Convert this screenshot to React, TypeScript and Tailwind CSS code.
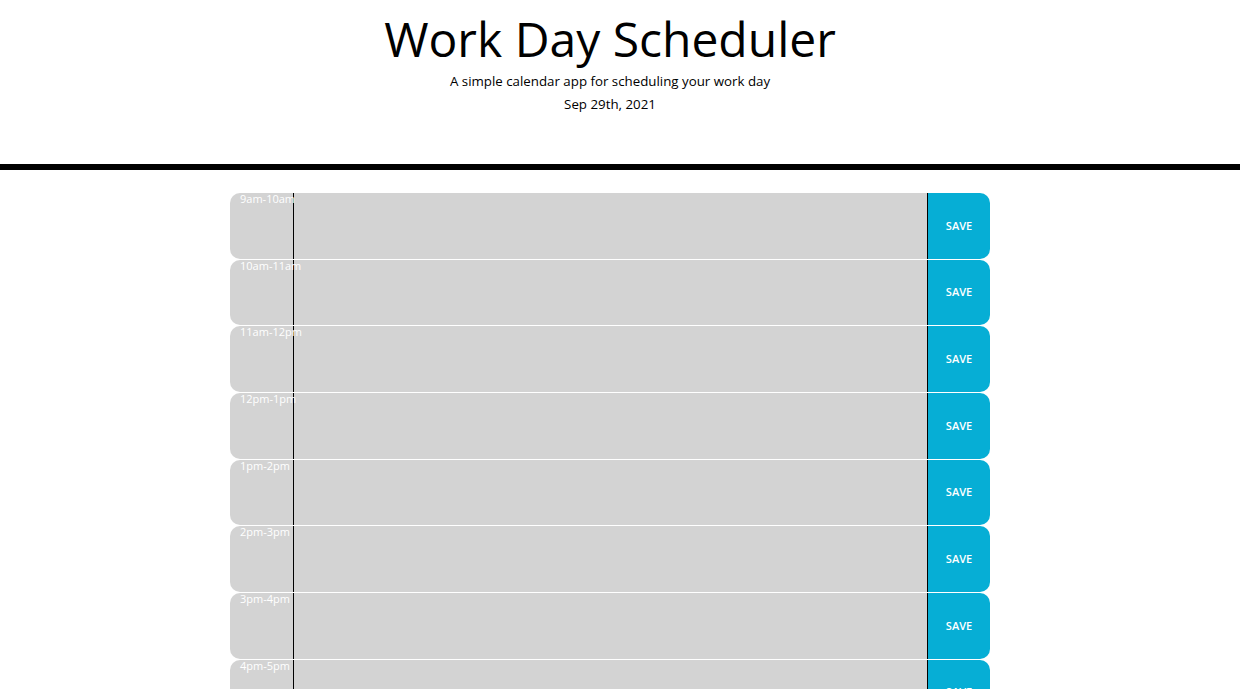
const hours = [
  "9am-10am",
  "10am-11am",
  "11am-12pm",
  "12pm-1pm",
  "1pm-2pm",
  "2pm-3pm",
  "3pm-4pm",
  "4pm-5pm",
  "5pm-6pm",
];

function TimeBlock({ label }: { label: string }) {
  return (
    <div className="flex h-[65.67px] shrink-0">
      <div className="relative z-10 w-[64px] shrink-0 rounded-l-[10px] border-r border-black bg-[#d3d3d3] pl-[10px] text-[11px] leading-[11px] text-white whitespace-nowrap">
        {label}
      </div>
      <textarea className="h-full w-[633px] shrink-0 resize-none bg-[#d3d3d3] outline-none" />
      <button className="w-[63px] shrink-0 rounded-r-[10px] border-l border-black bg-[#06aed5] text-[11px] font-semibold text-white">
        SAVE
      </button>
    </div>
  );
}

export default function App() {
  return (
    <div className="min-h-screen bg-white text-black" style={{ fontFamily: '"Open Sans", sans-serif' }}>
      <header className="pt-[10px] pr-[20px] pb-[50px] text-center">
        <h1 className="text-[48px] font-normal leading-[58px]">Work Day Scheduler</h1>
        <p className="mt-[3px] text-[13.3px] leading-[20px]">A simple calendar app for scheduling your work day</p>
        <p className="mt-[3px] text-[13.3px] leading-[20px]">Sep 29th, 2021</p>
      </header>
      <div className="h-[6px] bg-black" />
      <div className="ml-[230px] mt-[23px] flex w-[760px] flex-col gap-px">
        {hours.map((h) => (
          <TimeBlock key={h} label={h} />
        ))}
      </div>
    </div>
  );
}
